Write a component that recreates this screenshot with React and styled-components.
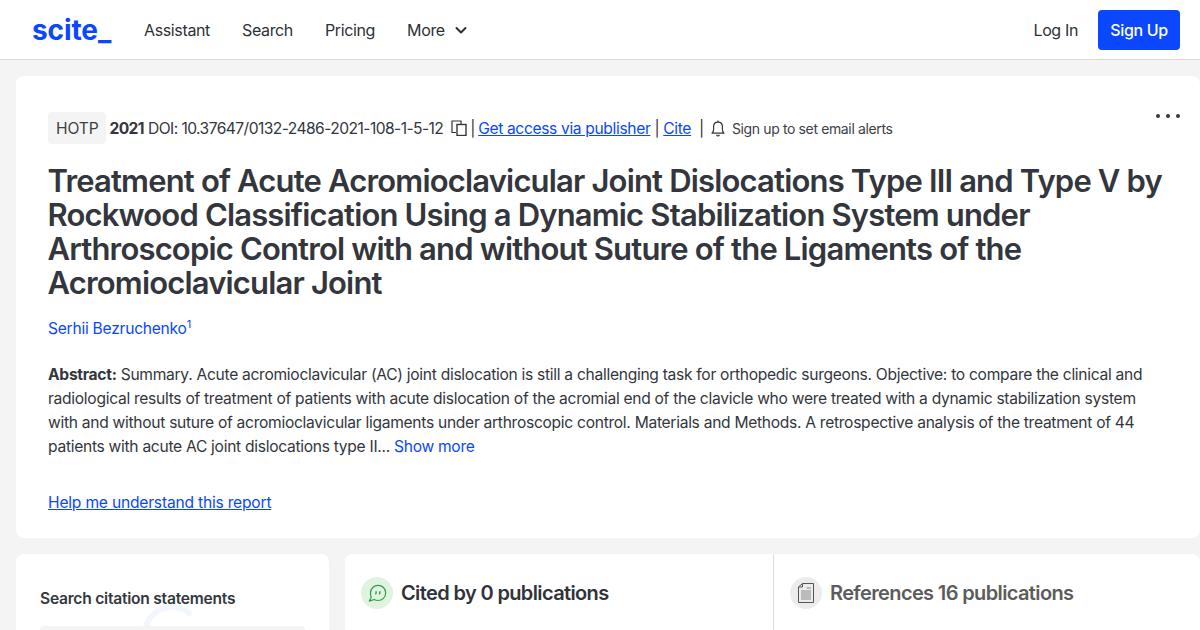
import React from "react";
import styled, { createGlobalStyle } from "styled-components";

const Global = createGlobalStyle`
  html, body { margin: 0; padding: 0; height: 630px; overflow: hidden; background: #f4f4f4; }
  body { font-family: Inter, "Liberation Sans", sans-serif; color: #33373d; }
  a { color: #0a47ff; }
`;

const Header = styled.header`
  height: 59px; background: #fff; border-bottom: 1px solid #d9d9d9;
  display: flex; align-items: center; padding: 0 20px 0 32px;
`;
const Logo = styled.div`
  font-size: 28px; font-weight: 700; color: #0a47ff; line-height: 1; letter-spacing: -0.1px; width: 112px;
`;
const Nav = styled.nav`
  display: flex; align-items: center; gap: 32px; font-size: 16px; color: #2d3136; flex: 1; letter-spacing: -0.36px;
`;
const NavItem = styled.span`
  display: inline-flex; align-items: center; gap: 9px;
`;
const Login = styled.span`
  font-size: 16px; color: #2d3136; margin-right: 20px; letter-spacing: -0.36px;
`;
const SignUp = styled.button`
  width: 82px; height: 40px; border: 0; border-radius: 4px; background: #0a47ff; color: #fff;
  font: 500 16px Inter, sans-serif; letter-spacing: -0.34px;
`;
const Page = styled.main`
  padding: 16px 0 0 16px; display: flex; flex-direction: column; gap: 16px;
`;
const Card = styled.section`
  background: #fff; border-radius: 8px; position: relative;
`;
const Report = styled(Card)`
  height: 462px; padding: 36px 32px 0; box-sizing: border-box;
`;
const Meta = styled.div`
  display: flex; align-items: center; height: 32px; font-size: 15.6px; letter-spacing: -0.35px; white-space: nowrap;
`;
const Journal = styled.span`
  background: #f4f4f4; border-radius: 4px; height: 32px; line-height: 33px; padding: 0 8px; margin-right: 3px; color: #3c4148; letter-spacing: -0.15px;
`;
const Year = styled.b`
  font-weight: 700; letter-spacing: -0.6px; margin-right: 4px;
`;
const Doi = styled.span`
  letter-spacing: -0.56px;
`;
const CopyIcon = styled.svg`
  margin: 0 2px 0 8px;
`;
const Sep = styled.span`
  margin: 0 ${p => p.$r ?? 3}px 0 ${p => p.$l ?? 3}px;
`;
const AlertText = styled.span`
  font-size: 14px; letter-spacing: -0.37px; margin-left: 7px; color: #3c4148;
`;
const Dots = styled.div`
  position: absolute; right: 20px; top: 38px; display: flex; gap: 6px;
`;
const Dot = styled.i`
  width: 4px; height: 4px; border-radius: 50%; background: #33373d;
`;
const Title = styled.h1`
  margin: 20px 0 0 -0.5px; font-size: 31px; line-height: 34px; font-weight: 600; letter-spacing: -0.83px; color: #33373d; width: 1125px;
`;
const Author = styled.div`
  margin-top: 17px; font-size: 15.6px; line-height: 24px; letter-spacing: -0.25px; color: #0a47ff;
  sup { font-size: 11px; line-height: 0; vertical-align: 6px; }
`;
const Abstract = styled.p`
  margin: 22px 0 0; font-size: 15.6px; line-height: 24px; letter-spacing: -0.29px; color: #33373d; width: 1110px;
  b { font-weight: 700; }
`;
const More = styled.span`
  color: #0a47ff;
`;
const Help = styled.a`
  display: block; margin-top: 32px; font-size: 15.6px; line-height: 24px; letter-spacing: -0.2px; text-decoration: underline;
`;
const Bottom = styled.div`
  display: flex; gap: 16px;
`;
const Side = styled(Card)`
  width: 313px; height: 200px; padding: 35px 24px 0; box-sizing: border-box; flex: none; overflow: hidden;
`;
const SideTitle = styled.div`
  font-size: 15.6px; line-height: 20px; font-weight: 600; letter-spacing: -0.24px; color: #33373d;
  position: relative;
`;
const SearchBox = styled.div`
  margin-top: 17px; height: 40px; background: #f4f4f4; border-radius: 4px; position: relative;
`;
const Spinner = styled.div`
  position: absolute; left: 126px; top: 50px; width: 60px; height: 60px; border-radius: 50%;
  border: 6px solid transparent; border-left-color: #f3f6ff; border-top-color: #f3f6ff; box-sizing: border-box;
`;
const Main = styled(Card)`
  flex: 1; height: 200px; display: flex;
`;
const Pane = styled.div`
  flex: ${p => p.$w ? `0 0 ${p.$w}px` : 1}; padding: 23px 16px 0; box-sizing: border-box; display: flex; align-items: flex-start; gap: 8px;
  & + & { border-left: 1px solid #dcdcdc; }
`;
const Badge = styled.span`
  width: 32px; height: 32px; border-radius: 50%; background: ${p => p.$bg}; display: flex; align-items: center; justify-content: center; flex: none;
`;
const PaneTitle = styled.div`
  font-size: 20px; line-height: 32px; font-weight: 600; letter-spacing: -0.63px; color: ${p => p.$c};
`;

export default function App() {
  return (
    <>
      <Global />
      <Header>
        <Logo>scite_</Logo>
        <Nav>
          <NavItem>Assistant</NavItem>
          <NavItem>Search</NavItem>
          <NavItem>Pricing</NavItem>
          <NavItem>
            More
            <svg width="14" height="14" viewBox="0 0 14 14" fill="none" stroke="#2d3136" strokeWidth="2" strokeLinecap="round" strokeLinejoin="round">
              <path d="M2.500 5l4.500 4.500L11.500 5" />
            </svg>
          </NavItem>
        </Nav>
        <Login>Log In</Login>
        <SignUp>Sign Up</SignUp>
      </Header>
      <Page>
        <Report>
          <Meta>
            <Journal>HOTP</Journal>
            <Year>2021</Year>
            <Doi>DOI: 10.37647/0132-2486-2021-108-1-5-12</Doi>
            <CopyIcon width="16" height="16" viewBox="0 0 16 16" fill="none" stroke="#33373d" strokeWidth="1.200">
              <path d="M5 12.500H1V1h9v3" />
              <rect x="6" y="4.500" width="9" height="11" strokeWidth="1.400" />
            </CopyIcon>
            <Sep $l={1} $r={3}>|</Sep>
            <a href="#a">Get access via publisher</a>
            <Sep $l={4} $r={4}>|</Sep>
            <a href="#b">Cite</a>
            <Sep $l={8} $r={7}>|</Sep>
            <svg width="14" height="17" viewBox="0 0 14 17" fill="none" stroke="#33373d" strokeWidth="1.200" strokeLinejoin="round">
              <path d="M1 13.200c1.200-1 1.600-2 1.600-4V6.600C2.600 4 4.500 2.200 7 2.200s4.400 1.800 4.400 4.400v2.600c0 2 .4 3 1.600 4H1z" />
              <path d="M7 .6v1.600M5.600 14.800c.3.800.8 1.200 1.400 1.200s1.100-.4 1.400-1.200" />
            </svg>
            <AlertText>Sign up to set email alerts</AlertText>
          </Meta>
          <Dots><Dot /><Dot /><Dot /></Dots>
          <Title>Treatment of Acute Acromioclavicular Joint Dislocations Type III and Type V by Rockwood Classification Using a Dynamic Stabilization System under Arthroscopic Control with and without Suture of the Ligaments of the Acromioclavicular Joint</Title>
          <Author>Serhii Bezruchenko<sup>1</sup></Author>
          <Abstract>
            <b>Abstract:</b> Summary. Acute acromioclavicular (AC) joint dislocation is still a challenging task for orthopedic surgeons. Objective: to compare the clinical and radiological results of treatment of patients with acute dislocation of the acromial end of the clavicle who were treated with a dynamic stabilization system with and without suture of acromioclavicular ligaments under arthroscopic control. Materials and Methods. A retrospective analysis of the treatment of 44 patients with acute AC joint dislocations type II... <More>Show more</More>
          </Abstract>
          <Help href="#c">Help me understand this report</Help>
        </Report>
        <Bottom>
          <Side>
            <Spinner />
            <SideTitle>Search citation statements</SideTitle>
            <SearchBox />
          </Side>
          <Main>
            <Pane $w={428}>
              <Badge $bg="#dff3e0">
                <svg width="21" height="21" viewBox="0 0 18 18" fill="none" stroke="#2e9e46" strokeWidth="1" strokeLinejoin="round">
                  <path d="M9.500 2C13.100 2 16 4.800 16 8.500S13.100 15 9.500 15c-1.300 0-2.400-.3-3.400-.9L2 15.500l1.600-3.300C3.200 11.100 3 9.800 3 8.500 3 4.800 5.900 2 9.500 2z" />
                  <path d="M7.800 7v1.300c0 .6-.2 1-.7 1.300M11 7v1.300c0 .6-.2 1-.7 1.300" strokeWidth="1.200" />
                </svg>
              </Badge>
              <PaneTitle $c="#2f333a">Cited by 0 publications</PaneTitle>
            </Pane>
            <Pane>
              <Badge $bg="#ececec">
                <svg width="18" height="22" viewBox="0 0 18 22" fill="none" stroke="#555" strokeWidth="1">
                  <path d="M5.500 1.500H16.500V20.500H1.500V5z" />
                  <path d="M5.500 1.500V5H1.500" />
                  <path d="M9.500 6h4.500M4 9h10M4 11h10M4 13h10M4 15h10M4 17h10" stroke="#8a8a8a" />
                </svg>
              </Badge>
              <PaneTitle $c="#5c5c5c">References 16 publications</PaneTitle>
            </Pane>
          </Main>
        </Bottom>
      </Page>
    </>
  );
}
